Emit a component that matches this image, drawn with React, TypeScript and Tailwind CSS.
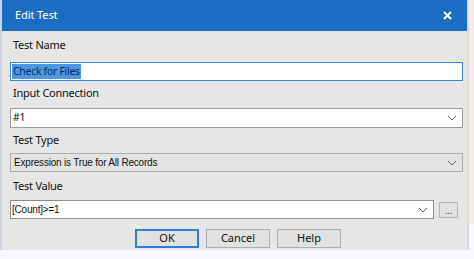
import React from "react";

function Chevron() {
  return (
    <svg width="10" height="6" viewBox="0 0 10 6" className="shrink-0">
      <polyline points="1,1 5,5 9,1" fill="none" stroke="#606060" strokeWidth="1" />
    </svg>
  );
}

function Label({ text, className }: { text: string; className?: string }) {
  return (
    <div className={"h-[16px] pl-[3px] text-[11px] leading-[16px] tracking-[-0.25px] text-[#111] " + (className ?? "")}>
      {text}
    </div>
  );
}

const smallFont = { fontFamily: '"Liberation Sans", Arial, sans-serif' };

export default function App() {
  return (
    <div
      className="flex h-[259px] w-[474px] overflow-hidden bg-[#f6f8fb]"
      style={{ fontFamily: '"Noto Sans", "Open Sans", sans-serif' }}
    >
      <div className="flex h-[250px] w-[469px] flex-col border-l-[2px] border-r-[2px] border-l-[#c7d3e0] border-r-[#dadada] bg-[#e6e6e6]">
        {/* title bar */}
        <div className="flex h-[31px] items-center justify-between bg-[#1a6dc2] pl-[13px] pr-[15px]">
          <span className="text-[11px] tracking-[-0.1px] text-white">Edit Test</span>
          <svg width="9" height="9" viewBox="0 0 9 9">
            <path d="M1 1 L8 8 M8 1 L1 8" stroke="#ffffff" strokeWidth="2" />
          </svg>
        </div>

        <div className="flex flex-col pl-[8px] pr-[4px] pt-[6px]">
          <Label text="Test Name" />
          <div className="mt-[9px] flex h-[19px] items-center border border-[#3a87d4] bg-white pl-[1px]">
            <span className="bg-[#4a97e4] px-[1px] text-[10.5px] leading-[15px] tracking-[-0.3px] text-[#0e2a55]">
              Check for Files
            </span>
          </div>

          <Label text="Input Connection" className="mt-[4px]" />
          <div className="mt-[7px] flex h-[20px] items-center justify-between border border-[#9a9a9a] bg-white pl-[2px] pr-[5px]">
            <span className="text-[10.5px] tracking-[-0.2px] text-[#111]">#1</span>
            <Chevron />
          </div>

          <Label text="Test Type" className="mt-[4px]" />
          <div className="mt-[5px] flex h-[19px] items-center justify-between border border-[#adadad] bg-[#e3e3e3] pl-[3px] pr-[5px]">
            <span className="text-[10px] tracking-[-0.2px] text-[#111]" style={smallFont}>
              Expression is True for All Records
            </span>
            <Chevron />
          </div>

          <Label text="Test Value" className="mt-[6px]" />
          <div className="mt-[6px] flex items-center">
            <div className="flex h-[19px] w-[424px] items-center justify-between border border-[#8c8c8c] bg-white pl-[1px] pr-[5px]">
              <span className="text-[10px] tracking-[-0.2px] text-[#111]" style={smallFont}>
                [Count]&gt;=1
              </span>
              <Chevron />
            </div>
            <div className="ml-[5px] flex h-[16px] w-[19px] items-end justify-center border border-[#b5b5b5] bg-[#e1e1e1] pb-[2px] text-[9px] leading-[9px] text-[#333]">
              ...
            </div>
          </div>

          <div className="mt-[10px] flex pl-[125px]">
            <div className="flex h-[19px] w-[64px] items-center justify-center border-[2px] border-[#2f7fd2] bg-[#e1e1e1] text-[11px] text-[#111]">
              OK
            </div>
            <div className="ml-[7px] flex h-[19px] w-[64px] items-center justify-center border border-[#adadad] bg-[#e1e1e1] text-[11px] text-[#111]">
              Cancel
            </div>
            <div className="ml-[7px] flex h-[19px] w-[64px] items-center justify-center border border-[#adadad] bg-[#e1e1e1] text-[11px] text-[#111]">
              Help
            </div>
          </div>
        </div>
      </div>
      <div className="flex flex-1 flex-col">
        <div className="h-[224px] bg-[#fbe9e9]" />
        <div className="flex-1 bg-[#f6f8fb]" />
      </div>
    </div>
  );
}
